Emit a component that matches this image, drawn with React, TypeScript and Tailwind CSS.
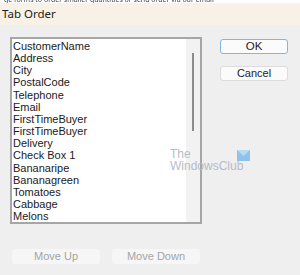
const fields = [
  "CustomerName",
  "Address",
  "City",
  "PostalCode",
  "Telephone",
  "Email",
  "FirstTimeBuyer",
  "FirstTimeBuyer",
  "Delivery",
  "Check Box 1",
  "Bananaripe",
  "Bananagreen",
  "Tomatoes",
  "Cabbage",
  "Melons",
  "Mangoes",
];

const App = () => {
  return (
    <div className="w-[300px] h-[275px] overflow-hidden bg-[#efefef] flex flex-col font-['Noto_Sans',sans-serif]">
      {/* page text peeking out above the dialog */}
      <div className="h-[3px] overflow-hidden bg-white flex items-end">
        <span className="text-[7px] leading-[7px] text-[#444] blur-[0.5px] whitespace-nowrap pl-1">
          ge forms to order smaller quantities or send order via our email
        </span>
      </div>

      <div className="h-[22px] bg-[#f8f1e6] flex items-center px-[2px] text-[11.5px] text-[#222]">
        Tab Order
      </div>

      <div className="flex-1 relative flex">
        <div className="flex flex-col pl-[10px] pt-[12px]">
          <div className="w-[192px] h-[187px] border-2 border-[#a6a6a6] bg-white flex overflow-hidden">
            <ul className="flex-1 pl-[1px] pt-[1px] font-['Liberation_Sans',sans-serif] text-[11px] leading-[12.15px] text-[#1a1a1a]">
              {fields.map((f, i) => (
                <li key={i} className="whitespace-nowrap">
                  {f}
                </li>
              ))}
            </ul>
            <div className="w-[14px] bg-[#f2f2f2] flex justify-center pt-[14px]">
              <div className="w-[2px] h-[78px] bg-[#8c8c8c]" />
            </div>
          </div>

          <div className="flex gap-[12px] mt-[25px] pl-[2px]">
            <button className="w-[88px] h-[15px] rounded-[3px] bg-[#f6f6f6] text-[11px] leading-[15px] text-[#a5a5a5] font-['Liberation_Sans',sans-serif]">
              Move Up
            </button>
            <button className="w-[88px] h-[15px] rounded-[3px] bg-[#f6f6f6] text-[11px] leading-[15px] text-[#a5a5a5] font-['Liberation_Sans',sans-serif]">
              Move Down
            </button>
          </div>
        </div>

        <div className="flex flex-col pl-[18px] pt-[14px] gap-[12px]">
          <button className="w-[68px] h-[15px] rounded-[3px] border border-[#7fb6ea] bg-[#fbfbfb] text-[11.5px] leading-[13px] text-[#222] font-['Liberation_Sans',sans-serif]">
            OK
          </button>
          <button className="w-[68px] h-[15px] rounded-[3px] border border-[#dcdcdc] bg-[#fbfbfb] text-[11px] leading-[13px] text-[#222] font-['Liberation_Sans',sans-serif]">
            Cancel
          </button>
        </div>

        {/* watermark over the list */}
        <div className="absolute left-[170px] top-[124px] flex flex-col text-[#b7bcc4] text-[12px] leading-[11px] font-['Liberation_Sans',sans-serif] pointer-events-none">
          <div className="flex items-start">
            <span>The</span>
            <svg width="13" height="11" viewBox="0 0 13 11" className="ml-[46px] mt-[1px]">
              <rect width="13" height="11" fill="#8fc3ec" />
              <path d="M0 0 L6.5 6 L13 0" fill="#b9dcf5" />
            </svg>
          </div>
          <span>WindowsClub</span>
        </div>
      </div>
    </div>
  );
};

export default App;
